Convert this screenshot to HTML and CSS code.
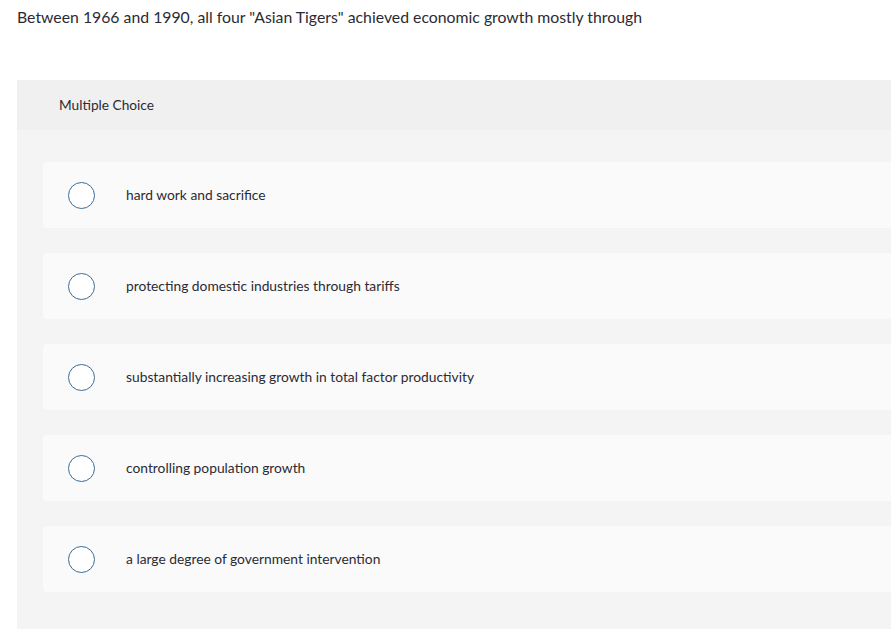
FILE: index.html
```html
<!DOCTYPE html>
<html>
<head>
<meta charset="utf-8">
<link rel="stylesheet" href="styles.css">
</head>
<body>
<div class="page">
  <p class="question">Between 1966 and 1990, all four "Asian Tigers" achieved economic growth mostly through</p>
  <section class="mc">
    <div class="mc-head">Multiple Choice</div>
    <div class="mc-body">
      <div class="option"><span class="radio"></span><span class="label">hard work and sacrifice</span></div>
      <div class="option"><span class="radio"></span><span class="label">protecting domestic industries through tariffs</span></div>
      <div class="option"><span class="radio"></span><span class="label">substantially increasing growth in total factor productivity</span></div>
      <div class="option"><span class="radio"></span><span class="label">controlling population growth</span></div>
      <div class="option"><span class="radio"></span><span class="label">a large degree of government intervention</span></div>
    </div>
  </section>
</div>
</body>
</html>
```

FILE: styles.css
```css
html, body {
  margin: 0;
  padding: 0;
  background: #fff;
  overflow: hidden;
}
body {
  font-family: Lato, "Liberation Sans", sans-serif;
  color: #2b2b35;
}
.page {
  padding: 8px 0 0 17px;
  width: 900px;
}
.question {
  margin: 0;
  font-size: 15.8px;
  line-height: 18px;
  height: 72px;
}
.mc {
  background: #f4f4f4;
  height: 560px;
}
.mc-head {
  background: #f0f0f0;
  height: 48px;
  padding-bottom: 2px;
  display: flex;
  align-items: center;
  padding-left: 42px;
  font-size: 13.7px;
}
.mc-body {
  padding: 32px 0 0 26px;
  display: flex;
  flex-direction: column;
  gap: 25px;
}
.option {
  background: #fafafa;
  height: 66px;
  border-radius: 4px 0 0 4px;
  display: flex;
  align-items: center;
  padding-left: 25px;
  font-size: 13.8px;
}
.radio {
  width: 25px;
  height: 25px;
  border: 1.5px solid #3b6a98;
  border-radius: 50%;
  background: #fff;
  flex: none;
}
.label {
  margin-left: 31px;
  margin-bottom: 2px;
}
```
